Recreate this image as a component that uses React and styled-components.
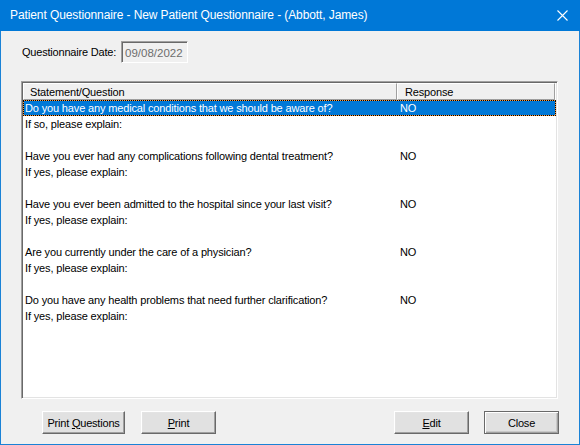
import React from "react";
import styled, { createGlobalStyle } from "styled-components";

const Global = createGlobalStyle`
  html, body { margin: 0; padding: 0; background: #f0f0f0; }
  * { box-sizing: border-box; }
`;

const Window = styled.div`
  width: 580px;
  height: 445px;
  border: 1px solid #1a82d6;
  border-top: none;
  background: #f0f0f0;
  display: flex;
  flex-direction: column;
  font-family: "Liberation Sans", Arial, sans-serif;
  font-size: 11px;
  letter-spacing: -0.15px;
  color: #000;
`;

const TitleBar = styled.div`
  height: 31px;
  margin: 0 -1px;
  background: #0078d7;
  color: #fff;
  display: flex;
  align-items: center;
  justify-content: space-between;
  padding: 0 6px 1px 10px;
  font-size: 12px;
  letter-spacing: -0.1px;
`;

const CloseX = styled.svg`
  width: 11px;
  height: 11px;
  margin-right: 6px;
`;

const Body = styled.div`
  flex: 1;
  display: flex;
  flex-direction: column;
  padding: 10px 21px 0 20px;
`;

const DateRow = styled.div`
  display: flex;
  align-items: center;
  height: 22px;
  gap: 5px;
  padding-left: 1px;
`;

const DateLabel = styled.span`
  letter-spacing: -0.2px;
`;

const DateBox = styled.div`
  width: 67px;
  height: 22px;
  border-top: 1px solid #a0a0a0;
  border-left: 1px solid #a0a0a0;
  border-right: 1px solid #fff;
  border-bottom: 1px solid #fff;
  box-shadow: inset 1px 1px 0 #696969;
  color: #6d6d6d;
  display: flex;
  align-items: center;
  padding-left: 3px;
  padding-top: 1px;
  font-size: 11.5px;
  letter-spacing: 0;
`;

const Frame = styled.div`
  margin-top: 18px;
  height: 318px;
  background: #fff;
  border-top: 1px solid #a0a0a0;
  border-left: 1px solid #a0a0a0;
  border-right: 1px solid #fff;
  border-bottom: 1px solid #fff;
  box-shadow: inset 1px 1px 0 #696969, inset -1px -1px 0 #e3e3e3;
  padding: 1px;
  display: flex;
  flex-direction: column;
`;

const HeaderRow = styled.div`
  display: flex;
  height: 17px;
  margin-right: 1px;
  background: #f0f0f0;
`;

const HeadCell = styled.div`
  width: ${(p) => p.$w}px;
  flex: ${(p) => (p.$grow ? 1 : "none")};
  border-top: 1px solid #fff;
  border-left: 1px solid #fff;
  border-right: 1px solid #a0a0a0;
  border-bottom: 1px solid #a0a0a0;
  padding-left: ${(p) => p.$pad}px;
  display: flex;
  align-items: center;
  white-space: nowrap;
`;

const Row = styled.div`
  display: flex;
  height: 16px;
  align-items: center;
  white-space: nowrap;
  background: ${(p) => (p.$sel ? "#0078d7" : "transparent")};
  color: ${(p) => (p.$sel ? "#fff" : "#000")};
  box-shadow: ${(p) => (p.$sel ? "inset 0 0 0 1px #ff9a3c" : "none")};
  outline: ${(p) => (p.$sel ? "1px dotted #000" : "none")};
  outline-offset: -1px;
`;

const Cell = styled.div`
  width: ${(p) => p.$w}px;
  flex: none;
  padding-left: ${(p) => p.$pad}px;
`;

const ButtonBar = styled.div`
  display: flex;
  margin-top: 12px;
  padding-left: 21px;
  margin-right: -1px;
`;

const Btn = styled.button`
  width: ${(p) => p.$w}px;
  height: 23px;
  margin-left: ${(p) => p.$ml || 0}px;
  background: #e1e1e1;
  font-family: "Liberation Sans", Arial, sans-serif;
  font-size: 11px;
  letter-spacing: -0.2px;
  white-space: nowrap;
  color: #000;
  padding: 0;
  border-top: 1px solid #fff;
  border-left: 1px solid #fff;
  border-right: 1px solid #696969;
  border-bottom: 1px solid #696969;
  box-shadow: inset -1px -1px 0 #a0a0a0, inset 1px 1px 0 #e3e3e3;
  ${(p) =>
    p.$default &&
    `
    border: 1px solid #696969;
    box-shadow: inset 1px 1px 0 #fff, inset -1px -1px 0 #a0a0a0, inset -2px -2px 0 #c8c8c8;
  `}
`;

const Spacer = styled.div`
  flex: 1;
`;

const U = styled.span`
  text-decoration: underline;
`;

const questions = [
  ["Do you have any medical conditions that we should be aware of?", "If so, please explain:"],
  ["Have you ever had any complications following dental treatment?", "If yes, please explain:"],
  ["Have you ever been admitted to the hospital since your last visit?", "If yes, please explain:"],
  ["Are you currently under the care of a physician?", "If yes, please explain:"],
  ["Do you have any health problems that need further clarification?", "If yes, please explain:"],
];

export default function App() {
  return (
    <>
      <Global />
      <Window>
        <TitleBar>
          <span>Patient Questionnaire - New Patient Questionnaire - (Abbott, James)</span>
          <CloseX viewBox="0 0 11 11">
            <path d="M0.5 0.5 L10.5 10.5 M10.5 0.5 L0.5 10.5" stroke="#fff" strokeWidth="1.1" fill="none" />
          </CloseX>
        </TitleBar>
        <Body>
          <DateRow>
            <DateLabel>Questionnaire Date:</DateLabel>
            <DateBox>09/08/2022</DateBox>
          </DateRow>
          <Frame>
            <HeaderRow>
              <HeadCell $w={374} $pad={6}>Statement/Question</HeadCell>
              <HeadCell $grow $pad={7}>Response</HeadCell>
            </HeaderRow>
            {questions.map(([q, e], i) => (
              <React.Fragment key={i}>
                <Row $sel={i === 0}>
                  <Cell $w={374} $pad={2}>{q}</Cell>
                  <Cell $w={100} $pad={3}>NO</Cell>
                </Row>
                <Row>
                  <Cell $w={374} $pad={2}>{e}</Cell>
                </Row>
                <Row />
              </React.Fragment>
            ))}
          </Frame>
          <ButtonBar>
            <Btn $w={83}>Print <U>Q</U>uestions</Btn>
            <Btn $w={75} $ml={16}><U>P</U>rint</Btn>
            <Spacer />
            <Btn $w={75}><U>E</U>dit</Btn>
            <Btn $w={75} $ml={15} $default>Close</Btn>
          </ButtonBar>
        </Body>
      </Window>
    </>
  );
}
